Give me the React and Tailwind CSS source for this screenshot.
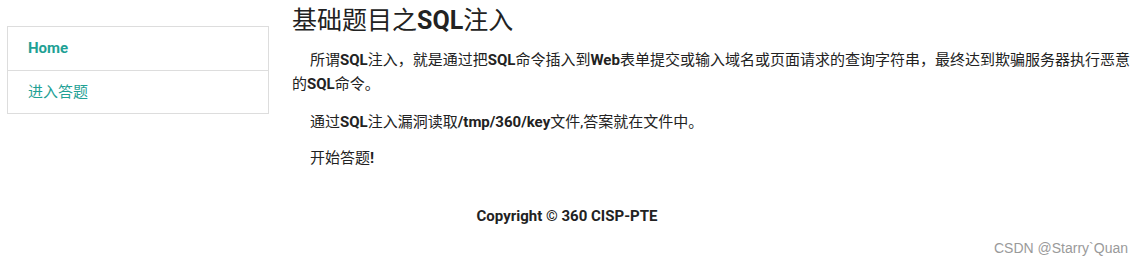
import React from "react";

const Sidebar = () => (
  <div className="w-[262px] shrink-0 self-start mt-[26px] ml-[7px] border border-[#dddddd] text-[15px] text-[#1fa195]">
    <div className="h-[44px] flex items-center pl-[20px] font-bold border-b border-[#dddddd]">Home</div>
    <div className="h-[42px] flex items-center pl-[20px]">进入答题</div>
  </div>
);

const App = () => {
  return (
    <div
      className="relative w-[1140px] h-[270px] bg-white text-[#222] overflow-hidden"
      style={{ fontFamily: 'Roboto, "Noto Sans CJK SC", sans-serif' }}
    >
      <div className="flex">
        <Sidebar />
        {/* main column */}
        <div className="ml-[23px] w-[842px] pt-[7px]">
          <h3 className="text-[25px] leading-[28px] mb-[13px]">
            基础题目之<b>SQL</b>注入
          </h3>
          <div className="text-[15px] leading-[24px]">
            <p className="indent-[18px] mb-[14px]">
              所谓<b>SQL</b>注入，就是通过把<b>SQL</b>命令插入到<b>Web</b>表单提交或输入域名或页面请求的查询字符串，最终达到欺骗服务器执行恶意的<b>SQL</b>命令。
            </p>
            <p className="indent-[18px] mb-[12px]">
              通过<b>SQL</b>注入漏洞读取<b>/tmp/360/key</b>文件,答案就在文件中。
            </p>
            <p className="indent-[18px]">
              开始答题<b>!</b>
            </p>
          </div>
        </div>
      </div>

      <div className="mt-[35px] pr-[6px] text-center text-[15px] font-bold text-[#222]">
        Copyright © 360 CISP-PTE
      </div>

      {/* watermark */}
      <div
        className="absolute right-[12px] bottom-[11px] text-[14px] text-[#9a9a9a]"
        style={{ fontFamily: '"Liberation Sans", sans-serif' }}
      >
        CSDN @Starry`Quan
      </div>
    </div>
  );
};

export default App;
